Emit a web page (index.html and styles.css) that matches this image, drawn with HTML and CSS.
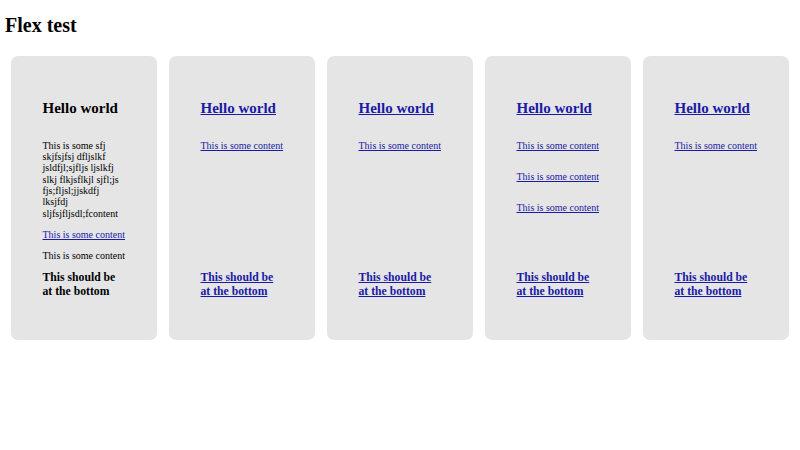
FILE: index.html
```html
<!DOCTYPE html>
<html>
<head>
<meta charset="utf-8">
<title>Flex test</title>
<link rel="stylesheet" href="styles.css">
</head>
<body>
<h1 class="title">Flex test</h1>
<div class="cards">
  <div class="card">
    <h2>Hello world</h2>
    <p>This is some sfj skjfsjfsj dfljslkf jsldfjl;sjfljs ljslkfj slkj flkjsflkjl sjfl;js fjs;fljsl;jjskdfj lksjfdj sljfsjfljsdl;fcontent</p>
    <a href="#">This is some content</a>
    <p>This is some content</p>
    <h3 class="bottom">This should be at the bottom</h3>
  </div>
  <div class="card">
    <a href="#"><h2>Hello world</h2></a>
    <a href="#"><p>This is some content</p></a>
    <a href="#" class="bottom"><h3>This should be at the bottom</h3></a>
  </div>
  <div class="card">
    <a href="#"><h2>Hello world</h2></a>
    <a href="#"><p>This is some content</p></a>
    <a href="#" class="bottom"><h3>This should be at the bottom</h3></a>
  </div>
  <div class="card">
    <a href="#"><h2>Hello world</h2></a>
    <a href="#"><p>This is some content</p></a>
    <a href="#"><p>This is some content</p></a>
    <a href="#"><p>This is some content</p></a>
    <a href="#" class="bottom"><h3>This should be at the bottom</h3></a>
  </div>
  <div class="card">
    <a href="#"><h2>Hello world</h2></a>
    <a href="#"><p>This is some content</p></a>
    <a href="#" class="bottom"><h3>This should be at the bottom</h3></a>
  </div>
</div>
</body>
</html>
```
FILE: styles.css
```css
html, body {
  background: #ffffff;
}
body {
  margin: 5px;
  font-family: "Liberation Serif", "Times New Roman", serif;
  font-size: 10px;
  line-height: 1.13;
  color: #000000;
}
.title {
  font-size: 2em;
  margin: 8.5px 0 13.4px;
}
.cards {
  display: flex;
  align-items: stretch;
}
.card {
  flex: 1 1 0;
  min-width: 0;
  margin: 6.25px;
  padding: 32.25px 31.25px 30.25px;
  background: #e5e5e5;
  border-radius: 7px;
  display: flex;
  flex-direction: column;
}
.card h2 {
  font-size: 1.5em;
  margin: 0.83em 0;
}
.card p {
  margin: 1em 0;
}
.card h3 {
  font-size: 1.17em;
  margin: 1em 0;
}
.card a {
  color: #1a1aa6;
}
.card .bottom {
  margin-top: auto;
}
```
